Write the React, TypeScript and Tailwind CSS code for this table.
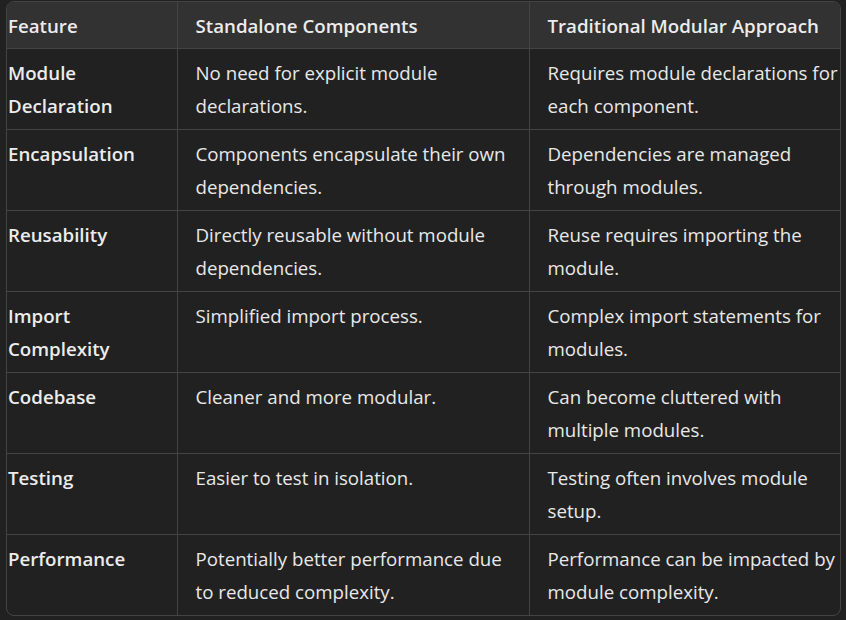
import React from "react";

const rows: [string, string, string][] = [
  ["Module Declaration", "No need for explicit module declarations.", "Requires module declarations for each component."],
  ["Encapsulation", "Components encapsulate their own dependencies.", "Dependencies are managed through modules."],
  ["Reusability", "Directly reusable without module dependencies.", "Reuse requires importing the module."],
  ["Import Complexity", "Simplified import process.", "Complex import statements for modules."],
  ["Codebase", "Cleaner and more modular.", "Can become cluttered with multiple modules."],
  ["Testing", "Easier to test in isolation.", "Testing often involves module setup."],
  ["Performance", "Potentially better performance due to reduced complexity.", "Performance can be impacted by module complexity."],
];

export default function App() {
  return (
    <div
      className="w-[846px] h-[620px] bg-[#212121] pt-px pl-[6px] pr-[5px] text-[18.7px] leading-[33px] text-[#e8e8e8]"
      style={{ fontFamily: '"Open Sans", "Noto Sans", sans-serif' }}
    >
      <div className="w-[835px] border border-[#444444] rounded-lg overflow-hidden">
        <table className="w-full table-fixed border-collapse">
          <colgroup>
            <col className="w-[170px]" />
            <col className="w-[352px]" />
            <col />
          </colgroup>
          <thead>
            <tr className="bg-[#323232]">
              <th className="text-left font-semibold text-[#ececec] pl-[1px] pr-2 pt-[7px] pb-[6px] border-r border-[#444444]">Feature</th>
              <th className="text-left font-semibold text-[#ececec] pl-[18px] pr-2 pt-[7px] pb-[6px] border-r border-[#444444]">Standalone Components</th>
              <th className="text-left font-semibold text-[#ececec] pl-[18px] pr-0 pt-[7px] pb-[6px] whitespace-nowrap">Traditional Modular Approach</th>
            </tr>
          </thead>
          <tbody>
            {rows.map((r, i) => (
              <tr key={i} className="border-t border-[#444444] align-top">
                <td className="font-semibold text-[#ececec] pl-[1px] pr-2 py-[7px] border-r border-[#444444]">{r[0]}</td>
                <td className="pl-[18px] pr-2 py-[7px] border-r border-[#444444]">{r[1]}</td>
                <td className="pl-[18px] pr-0 py-[7px]">{r[2]}</td>
              </tr>
            ))}
          </tbody>
        </table>
      </div>
    </div>
  );
}
